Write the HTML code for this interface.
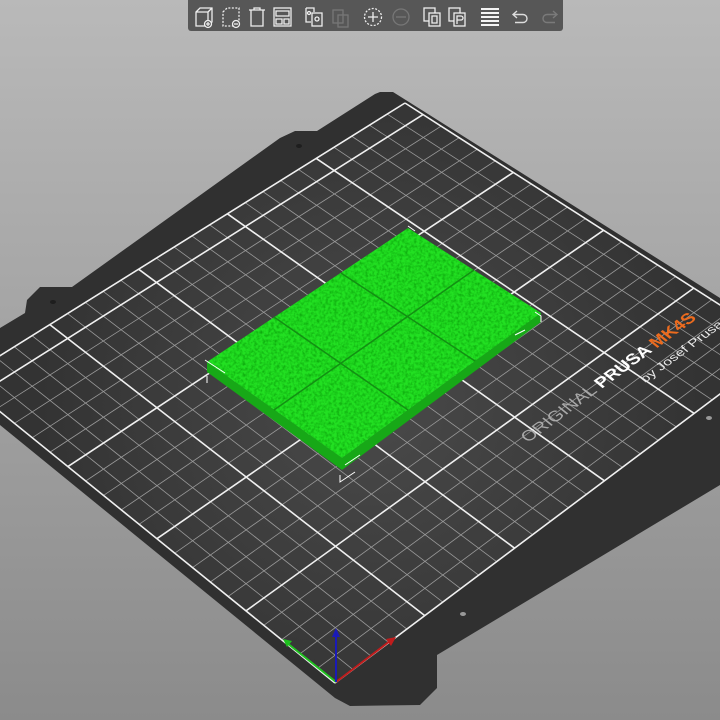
<!DOCTYPE html>
<html><head><meta charset="utf-8">
<style>
html,body{margin:0;padding:0;width:720px;height:720px;overflow:hidden;background:linear-gradient(#b9b9b9,#8b8b8b);}
svg{position:absolute;left:0;top:0}
</style></head>
<body>
<svg id="s" width="720" height="720" viewBox="0 0 720 720">
<defs>
<radialGradient id="hl" cx="370" cy="400" r="330" gradientUnits="userSpaceOnUse">
<stop offset="0" stop-color="#4a4a4a"/><stop offset="1" stop-color="#333"/>
</radialGradient>
<filter id="tex"><feTurbulence type="fractalNoise" baseFrequency="0.35" numOctaves="2" result="n"/><feColorMatrix type="matrix" values="0 0 0 0 0  0 0 0 0 0.25  0 0 0 0 0  0 0 0 -1.2 0.75" /><feComposite in2="SourceGraphic" operator="in"/></filter>
</defs>
<polygon fill="#303030" points="380,92 393,92 401,97 720,298 720,485 437,655 437,688 420,705 350,706 335,698 0,425 0,328 25,313 27,300 40,287 72,287 280,138 295,131 317,131 375,94"/>
<polygon id="gridfill" fill="url(#hl)"/>
<g id="minor" stroke="#9a9a9a" stroke-width="0.8"></g>
<g id="major" stroke="#f0f0f0" stroke-width="1.6"></g>
<ellipse cx="299" cy="146" rx="3" ry="2" fill="#1e1e1e"/>
<ellipse cx="53" cy="302" rx="3" ry="2" fill="#1e1e1e"/>
<ellipse cx="709" cy="418" rx="3" ry="2" fill="#999"/>
<ellipse cx="463" cy="614" rx="3" ry="2" fill="#999"/>
<text transform="matrix(0.806,-0.592,0.777,0.629,528,443)" font-family="Liberation Sans,sans-serif" font-weight="bold" font-size="17" textLength="210" lengthAdjust="spacingAndGlyphs"><tspan fill="#a9a9a9" font-weight="normal">ORIGINAL </tspan><tspan fill="#fff">PRUSA </tspan><tspan fill="#ec6b1e">MK4S</tspan></text>
<text transform="matrix(0.806,-0.592,0.777,0.629,645,383)" font-family="Liberation Sans,sans-serif" font-size="12" fill="#e8e8e8" textLength="98" lengthAdjust="spacingAndGlyphs">by Josef Prusa</text>
<!-- object -->
<polygon fill="#17a817" points="207,362 342,458 541,313 541,322 342,470 207,372"/>
<polygon fill="#22e022" points="207,362 408,228 541,313 342,458"/>
<polygon fill="#22e022" filter="url(#tex)" points="207,362 408,228 541,313 342,458"/>
<g stroke="#139013" stroke-width="1.5">
<line x1="274" y1="317" x2="408" y2="410"/>
<line x1="341" y1="273" x2="475" y2="361"/>
<line x1="274" y1="410" x2="474" y2="270"/>
</g>
<g stroke="#fff" stroke-width="1" fill="none">
<path d="M205,360 L225,373 M345,465 L360,455 M535,312 L541,316 L541,322 M515,335 L525,330 M408,226 L415,231 M207,376 L207,383 M340,475 L340,482 L355,472"/>
</g>
<!-- axes -->
<g stroke-width="2">
<line x1="336" y1="682" x2="287" y2="643" stroke="#1fc21f"/>
<line x1="336" y1="682" x2="390" y2="641" stroke="#c01c1c"/>
<line x1="336" y1="682" x2="336" y2="634" stroke="#1a1ab8"/>
</g>
<polygon points="283,639 292,641 287,647" fill="#1fc21f"/>
<polygon points="396,637 386,639 391,646" fill="#c01c1c"/>
<polygon points="336,628 332,637 340,637" fill="#1a1ab8"/>
<!-- toolbar -->
<rect x="188" y="-5" width="375" height="36" rx="3" fill="#575757"/>
<g fill="none" stroke="#eee" stroke-width="1.3">
<path d="M196,12 l4,-4 h12 v14 l-4,4 h-12 z M196,12 h12 v14 M208,12 l4,-4"/><circle cx="208" cy="24" r="3.5" fill="#575757"/><path d="M206,24h4M208,22v4"/>
<path d="M223,12 l4,-4 h12 v14 l-4,4 h-12 z" stroke-dasharray="2 1.5"/><circle cx="236" cy="24" r="3.5" fill="#575757"/><path d="M234,24h4"/>
<path d="M249,10h16M254,10v-2h6v2M251,10v16h12v-16"/>
<rect x="274" y="8" width="17" height="18"/><path d="M276,11h13v5h-13zM276,19h6v5h-6zM284,19h5v5h-5z"/>
<path d="M306,8h8v4M306,8v14h5"/><rect x="312" y="13" width="10" height="13"/><circle cx="309" cy="13" r="1.5"/><circle cx="317" cy="19" r="2"/>
<g stroke="#777"><rect x="333" y="10" width="10" height="13"/><rect x="338" y="15" width="10" height="12"/></g>
<circle cx="373" cy="17" r="8.5" stroke-dasharray="2 1.5"/><path d="M368,17h10M373,12v10"/>
<g stroke="#777"><circle cx="401" cy="17" r="8"/><path d="M396,17h10"/></g>
<rect x="424" y="8" width="11" height="13"/><rect x="429" y="13" width="11" height="13" fill="#575757"/><path d="M432,16h5v7h-5z"/>
<rect x="449" y="8" width="11" height="13"/><rect x="454" y="13" width="11" height="13" fill="#575757"/><path d="M457,24v-8h4a2,2 0 0 1 0,4h-4"/>
</g>
<g fill="#f4f4f4"><rect x="481" y="8" width="18" height="2"/><rect x="481" y="12" width="18" height="2"/><rect x="481" y="16" width="18" height="2"/><rect x="481" y="20" width="18" height="2"/><rect x="481" y="24" width="18" height="2"/></g>
<g fill="none" stroke-width="1.4">
<path d="M517,11l-4,3.5l4,3.5M513,14.5h10a4,4 0 0 1 0,8h-8" stroke="#ddd"/>
<path d="M553,11l4,3.5l-4,3.5M557,14.5h-10a4,4 0 0 0 0,8h8" stroke="#7a7a7a"/>
</g>
</svg>
<script>
var B=[335,683],R=[784,346],L=[-39,380],T=[405,103];
function P(u,v){return[B[0]*(1-u)*(1-v)+R[0]*u*(1-v)+L[0]*(1-u)*v+T[0]*u*v,B[1]*(1-u)*(1-v)+R[1]*u*(1-v)+L[1]*(1-u)*v+T[1]*u*v];}
var ns="http://www.w3.org/2000/svg";
document.getElementById('gridfill').setAttribute('points',[B,R,T,L].map(function(p){return p.join(',')}).join(' '));
function ln(g,a,b){var e=document.createElementNS(ns,'line');e.setAttribute('x1',a[0]);e.setAttribute('y1',a[1]);e.setAttribute('x2',b[0]);e.setAttribute('y2',b[1]);g.appendChild(e);}
var mi=document.getElementById('minor'),ma=document.getElementById('major');
for(var x=0;x<=250;x+=10){var g=(x%50==0)?ma:mi;ln(g,P(x/250,0),P(x/250,1));}
for(var y=0;y<=210;y+=10){var g=(y%50==0||y==210)?ma:mi;ln(g,P(0,y/210),P(1,y/210));}
</script>
</body></html>
